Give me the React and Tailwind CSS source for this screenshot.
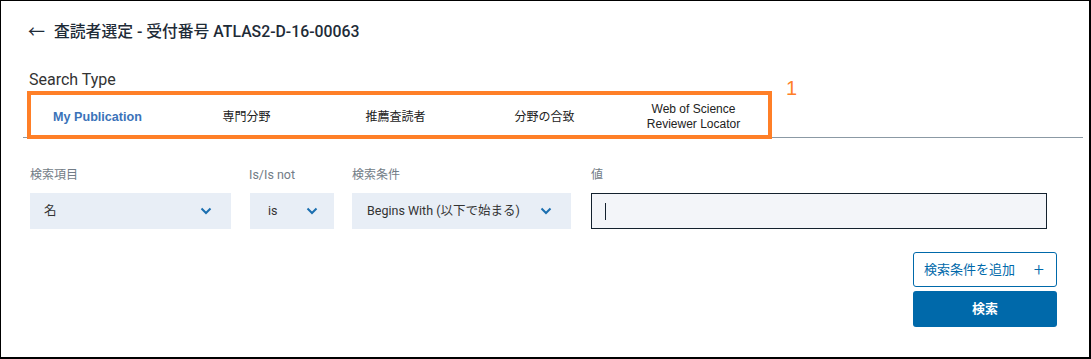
import React from 'react';

const Chevron = () => (
  <svg width="12" height="8" viewBox="0 0 12 8" className="shrink-0">
    <polyline points="1.5,1.5 6,6 10.5,1.5" fill="none" stroke="#1b6fb0" strokeWidth="2" />
  </svg>
);

const Select = ({ value, width, padLeft = 'pl-[14px]', padRight = 'pr-[19px]' }) => (
  <div className={`flex h-[36px] items-center justify-between bg-[#e8eef6] ${width} ${padLeft} ${padRight}`}>
    <span className="text-[12.5px] text-[#333]">{value}</span>
    <Chevron />
  </div>
);

const tabs = [
  { label: 'My Publication', active: true },
  { label: '専門分野' },
  { label: '推薦査読者' },
  { label: '分野の合致' },
  { label: 'Web of Science\nReviewer Locator' },
];

const App = () => {
  return (
    <div className="w-[1091px] h-[359px] bg-white border-l border-t border-r-2 border-b-2 border-black font-['Roboto','Noto_Sans_CJK_JP',sans-serif] overflow-hidden">
      <div className="pl-[27px] pr-[5px] pt-[21px]">
        {/* Title */}
        <div className="flex h-[20px] items-center gap-[9px] text-[#1e2b37]">
          <span className="text-[17px] leading-none">←</span>
          <span className="text-[15.8px] font-medium">査読者選定 - 受付番号 ATLAS2-D-16-00063</span>
        </div>

        <div className="mt-[28px] pl-[1px] text-[16px] leading-[19px] text-[#333]">Search Type</div>

        {/* Tabs */}
        <div className="relative mt-[2px] ml-[1px] mr-[1px]">
          <div className="flex h-[47px] pt-[6px] border-b border-[#8b99a4] -ml-[6px]">
            {tabs.map((t) => (
              <div
                key={t.label}
                className={`flex w-[149px] items-center justify-center text-center whitespace-pre-line font-['Liberation_Sans','Noto_Sans_CJK_JP',sans-serif] ${
                  t.active ? 'text-[12.6px] font-bold text-[#3b73b9]' : 'text-[12px] leading-[15px] text-[#222]'
                }`}
              >
                {t.label}
              </div>
            ))}
          </div>
          <div className="absolute -left-[2px] top-0 w-[745px] h-[48px] border-[4px] border-[#ff7f27]"></div>
          <div className="absolute left-[757px] -top-[18px] text-[20px] font-['Liberation_Sans',sans-serif] text-[#ff7f27]">1</div>
        </div>

        {/* Search row */}
        <div className="mt-[30px] flex gap-[19px] pl-[2px]">
          <div className="flex flex-col gap-[11px]">
            <span className="text-[12px] leading-[14px] text-[#727c86]">検索項目</span>
            <Select value="名" width="w-[201px]" />
          </div>
          <div className="flex flex-col gap-[11px]">
            <span className="-ml-[1px] text-[12.5px] leading-[14px] text-[#727c86]">Is/Is not</span>
            <Select value="is" width="w-[84px]" padLeft="pl-[18px]" padRight="pr-[16px]" />
          </div>
          <div className="-ml-[1px] flex flex-col gap-[11px]">
            <span className="text-[12px] leading-[14px] text-[#727c86]">検索条件</span>
            <Select value="Begins With (以下で始まる)" width="w-[219px]" padLeft="pl-[15px]" padRight="pr-[19px]" />
          </div>
          <div className="ml-[1px] flex flex-col gap-[11px]">
            <span className="text-[12px] leading-[14px] text-[#727c86]">値</span>
            <div className="flex h-[36px] w-[456px] items-center border border-[#13212e] bg-[#f3f5f9] pl-[13px]">
              <span className="h-[17px] w-[1px] bg-[#13212e]"></span>
            </div>
          </div>
        </div>

        {/* Buttons */}
        <div className="mt-[23px] flex flex-col items-end gap-[4px] pr-[27px]">
          <button className="flex h-[35px] w-[144px] items-center justify-between rounded-[3px] border border-[#0069aa] bg-white pl-[10px] pr-[12px] text-[13px] text-[#0069aa]">
            <span>検索条件を追加</span>
            <span className="text-[18px] font-light leading-none">+</span>
          </button>
          <button className="flex h-[36px] w-[144px] items-center justify-center rounded-[3px] bg-[#0069aa] text-[13px] font-bold text-white">
            検索
          </button>
        </div>
      </div>
    </div>
  );
};

export default App;
